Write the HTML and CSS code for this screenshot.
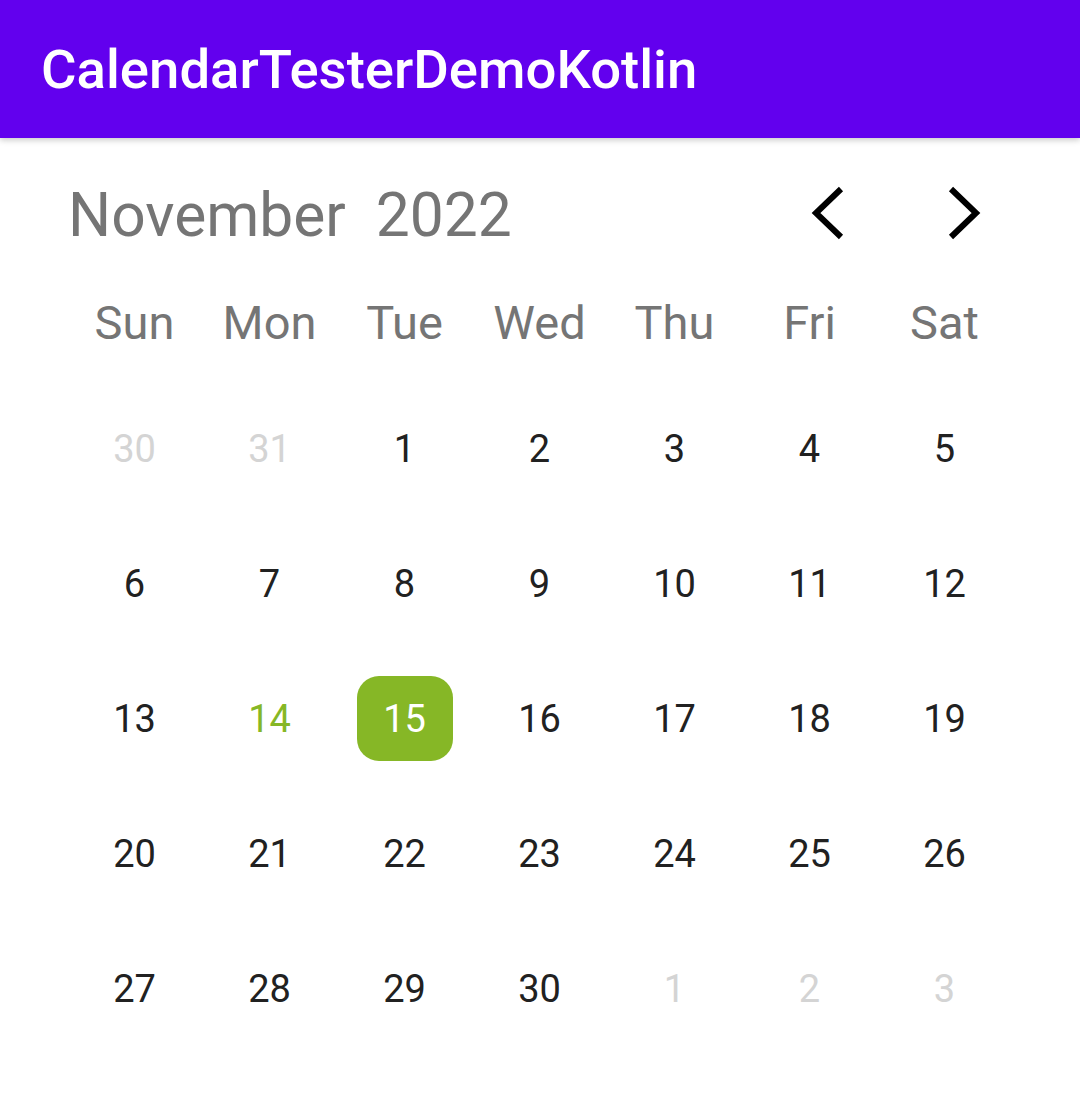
FILE: index.html
```html
<!DOCTYPE html>
<html>
<head>
<meta charset="utf-8">
<link rel="stylesheet" href="styles.css">
</head>
<body>
<header class="appbar"><span class="appbar-title">CalendarTesterDemoKotlin</span></header>
<main class="calendar">
  <div class="month-row">
    <div class="month-title">November&nbsp;&nbsp;2022</div>
    <div class="nav">
      <svg class="nav-btn" width="60" height="60" viewBox="0 0 60 60"><polyline points="42,6 17,30 42,54" fill="none" stroke="#000" stroke-width="6"/></svg>
      <svg class="nav-btn" width="60" height="60" viewBox="0 0 60 60"><polyline points="17,6 42,30 17,54" fill="none" stroke="#000" stroke-width="6"/></svg>
    </div>
  </div>
  <div class="weekdays">
    <div>Sun</div><div>Mon</div><div>Tue</div><div>Wed</div><div>Thu</div><div>Fri</div><div>Sat</div>
  </div>
  <div class="days">
    <div class="day muted">30</div><div class="day muted">31</div><div class="day">1</div><div class="day">2</div><div class="day">3</div><div class="day">4</div><div class="day">5</div>
    <div class="day">6</div><div class="day">7</div><div class="day">8</div><div class="day">9</div><div class="day">10</div><div class="day">11</div><div class="day">12</div>
    <div class="day">13</div><div class="day today">14</div><div class="day"><span class="selected">15</span></div><div class="day">16</div><div class="day">17</div><div class="day">18</div><div class="day">19</div>
    <div class="day">20</div><div class="day">21</div><div class="day">22</div><div class="day">23</div><div class="day">24</div><div class="day">25</div><div class="day">26</div>
    <div class="day">27</div><div class="day">28</div><div class="day">29</div><div class="day">30</div><div class="day muted">1</div><div class="day muted">2</div><div class="day muted">3</div>
  </div>
</main>
</body>
</html>
```
FILE: styles.css
```css
* { box-sizing: border-box; }
html, body { margin: 0; padding: 0; background: #fff; }
body { font-family: Roboto, "Liberation Sans", sans-serif; width: 1080px; height: 1099px; overflow: hidden; }
.appbar {
  height: 138px;
  background: #6200ee;
  display: flex;
  align-items: center;
  padding-left: 41px;
  box-shadow: 0 2px 6px rgba(0,0,0,0.22);
  position: relative;
  z-index: 1;
}
.appbar-title {
  color: #fff;
  font-size: 54.5px;
  font-weight: 500;
  line-height: 1;
}
.calendar { padding: 0 68px 0 67px; }
.month-row {
  display: flex;
  align-items: center;
  justify-content: space-between;
  height: 76px;
  margin-top: 40px;
}
.month-title {
  color: #757575;
  font-size: 60.5px;
  line-height: 1;
  padding-left: 1px;
}
.nav { display: flex; gap: 75px; margin-right: 18px; margin-top: -6px; }
.nav-btn { display: block; }
.weekdays {
  display: grid;
  grid-template-columns: repeat(7, 135px);
  height: 80px;
  margin-top: 28px;
  align-items: center;
  color: #757575;
  font-size: 47px;
  text-align: center;
}
.days {
  display: grid;
  grid-template-columns: repeat(7, 135px);
  grid-auto-rows: 135px;
  margin-top: 19px;
}
.day {
  display: flex;
  align-items: center;
  justify-content: center;
  font-size: 38px;
  color: #212121;
}
.day.muted { color: #d4d4d4; }
.day.today { color: #86b726; }
.selected {
  display: flex;
  align-items: center;
  justify-content: center;
  width: 96px;
  height: 85px;
  border-radius: 22px;
  background: #86b726;
  color: #fff;
}
```
